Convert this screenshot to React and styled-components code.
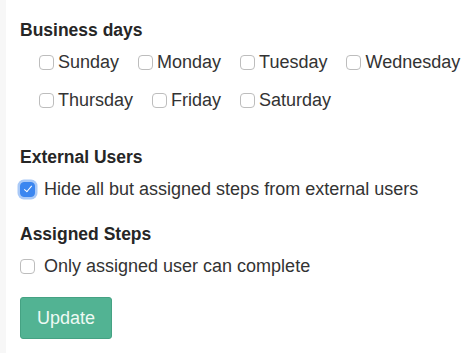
import React, { useState } from "react";
import styled, { createGlobalStyle } from "styled-components";

const GlobalStyle = createGlobalStyle`
  html, body {
    margin: 0;
    padding: 0;
    background: #ffffff;
    font-family: "Liberation Sans", Arial, Helvetica, sans-serif;
    color: #333333;
  }
`;

const Page = styled.div`
  display: flex;
  min-height: 353px;
`;

const Edge = styled.div`
  width: 6px;
  background: #f7f7f7;
  flex-shrink: 0;
`;

const Form = styled.div`
  display: flex;
  flex-direction: column;
  align-items: flex-start;
  padding: 20px 0 0 14px;
`;

const Heading = styled.div`
  font-size: 17.5px;
  line-height: 20px;
  font-weight: bold;
  color: #262626;
  margin-top: ${(props) => props.top || 0}px;
`;

const DayRow = styled.div`
  display: flex;
  padding-left: 19px;
  margin-top: ${(props) => props.top}px;
`;

const Option = styled.label`
  display: flex;
  align-items: center;
  gap: ${(props) => (props.wide ? 9 : 4)}px;
  margin-right: 19px;
  margin-top: ${(props) => props.top || 0}px;
  font-size: 18px;
  line-height: 24px;
  color: #333333;
  cursor: pointer;
`;

const Box = styled.input`
  appearance: none;
  margin: 0;
  width: 15px;
  height: 15px;
  border-radius: 4px;
  border: 1px solid #bdbdbd;
  background: #ffffff;
  flex-shrink: 0;
  position: relative;
  cursor: pointer;

  &:checked {
    background: #3b86f0;
    border-color: #3b86f0;
    box-shadow: 0 0 0 2.5px #a9c9f7;
  }

  &:checked::after {
    content: "";
    position: absolute;
    left: 4.5px;
    top: 1.5px;
    width: 3px;
    height: 7px;
    border: solid #ffffff;
    border-width: 0 1.6px 1.6px 0;
    transform: rotate(40deg);
  }
`;

const Button = styled.button`
  margin-top: 19px;
  width: 92px;
  height: 42px;
  border-radius: 3px;
  border: 1px solid #45a283;
  background: #52b393;
  color: #eefaf4;
  font-family: inherit;
  font-size: 18px;
  cursor: pointer;
`;

const rows = [
  ["Sunday", "Monday", "Tuesday", "Wednesday"],
  ["Thursday", "Friday", "Saturday"],
];

const App = () => {
  const [days, setDays] = useState({});
  const [hideExternal, setHideExternal] = useState(true);
  const [onlyAssigned, setOnlyAssigned] = useState(false);

  const toggle = (day) => setDays({ ...days, [day]: !days[day] });

  return (
    <Page>
      <GlobalStyle />
      <Edge />
      <Form>
        <Heading>Business days</Heading>
        {rows.map((row, i) => (
          <DayRow key={i} top={i === 0 ? 10 : 14}>
            {row.map((day) => (
              <Option key={day}>
                <Box
                  type="checkbox"
                  checked={!!days[day]}
                  onChange={() => toggle(day)}
                />
                {day}
              </Option>
            ))}
          </DayRow>
        ))}

        <Heading top={35}>External Users</Heading>
        <Option wide top={10}>
          <Box
            type="checkbox"
            checked={hideExternal}
            onChange={() => setHideExternal(!hideExternal)}
          />
          Hide all but assigned steps from external users
        </Option>

        <Heading top={23}>Assigned Steps</Heading>
        <Option wide top={10}>
          <Box
            type="checkbox"
            checked={onlyAssigned}
            onChange={() => setOnlyAssigned(!onlyAssigned)}
          />
          Only assigned user can complete
        </Option>

        <Button>Update</Button>
      </Form>
    </Page>
  );
};

export default App;
